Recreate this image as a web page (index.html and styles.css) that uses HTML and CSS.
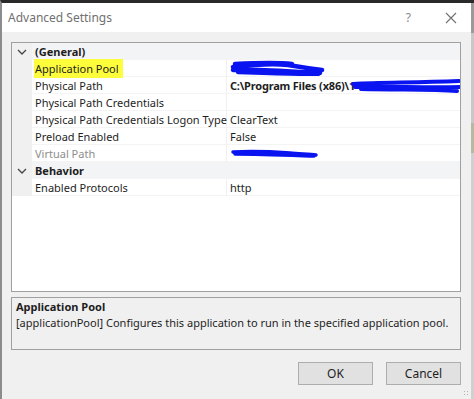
FILE: index.html
```html
<!DOCTYPE html>
<html lang="en">
<head>
    <meta charset="UTF-8">
    <title>Advanced Settings</title>
    <link rel="stylesheet" href="styles.css">
</head>
<body>
    <div class="screen">
        <div class="dialog">
            <div class="title-bar">
                <span class="title">Advanced Settings</span>
                <span class="help-btn">?</span>
                <svg class="close-btn" width="12" height="12" viewBox="0 0 12 12">
                    <path d="M1 1 L11 11 M11 1 L1 11" stroke="#707070" stroke-width="1.1" fill="none"/>
                </svg>
            </div>

            <div class="dialog-body">
                <div class="prop-grid">
                    <div class="row category">
                        <div class="gutter"><svg width="10" height="6" viewBox="0 0 10 6"><path d="M1 1 L5 5 L9 1" stroke="#444" stroke-width="1.3" fill="none"/></svg></div>
                        <div class="name">(General)</div>
                    </div>
                    <div class="row">
                        <div class="gutter"></div>
                        <div class="name"><span class="marker">Application Pool</span></div>
                        <div class="value">
                            <svg class="scribble" width="96" height="16" viewBox="0 0 96 16">
                                <path d="M3 7 C20 5 40 3 58 5 C70 7 82 9 92 10 M3 10 C25 9 50 11 90 13 M5 4 C25 3 45 2 62 4 M8 12 C40 13 70 14 88 14" stroke="#0a14f0" stroke-width="4.5" stroke-linecap="round" fill="none"/>
                            </svg>
                        </div>
                    </div>
                    <div class="row">
                        <div class="gutter"></div>
                        <div class="name">Physical Path</div>
                        <div class="value bold">C:\Program Files (x86)\<span class="cut">1</span>
                            <svg class="scribble" width="112" height="18" viewBox="0 0 112 18">
                                <path d="M2 8 C30 6 60 7 108 5 M4 11 C40 10 70 12 110 11 M10 13 C50 14 80 13 106 15" stroke="#0a14f0" stroke-width="4" stroke-linecap="round" fill="none"/>
                            </svg>
                        </div>
                    </div>
                    <div class="row">
                        <div class="gutter"></div>
                        <div class="name">Physical Path Credentials</div>
                        <div class="value"></div>
                    </div>
                    <div class="row">
                        <div class="gutter"></div>
                        <div class="name">Physical Path Credentials Logon Type</div>
                        <div class="value">ClearText</div>
                    </div>
                    <div class="row">
                        <div class="gutter"></div>
                        <div class="name">Preload Enabled</div>
                        <div class="value">False</div>
                    </div>
                    <div class="row disabled">
                        <div class="gutter"></div>
                        <div class="name">Virtual Path</div>
                        <div class="value">
                            <svg class="scribble" width="90" height="12" viewBox="0 0 90 12">
                                <path d="M3 5 C25 4 45 5 60 6 C70 7 80 7 86 8 M5 7 C30 7 55 8 84 9" stroke="#0a14f0" stroke-width="3.5" stroke-linecap="round" fill="none"/>
                            </svg>
                        </div>
                    </div>
                    <div class="row category">
                        <div class="gutter"><svg width="10" height="6" viewBox="0 0 10 6"><path d="M1 1 L5 5 L9 1" stroke="#444" stroke-width="1.3" fill="none"/></svg></div>
                        <div class="name">Behavior</div>
                    </div>
                    <div class="row">
                        <div class="gutter"></div>
                        <div class="name">Enabled Protocols</div>
                        <div class="value">http</div>
                    </div>
                </div>

                <div class="description">
                    <div class="desc-title">Application Pool</div>
                    <div class="desc-text">[applicationPool] Configures this application to run in the specified application pool.</div>
                </div>

                <div class="buttons">
                    <button class="btn">OK</button>
                    <button class="btn">Cancel</button>
                </div>
                <div class="grip"></div>
            </div>
        </div>
        <div class="backdrop"></div>
    </div>
</body>
</html>
```

FILE: styles.css
```css
body {
    margin: 0;
    padding: 0;
    font-family: "Noto Sans", "Open Sans", sans-serif;
    font-size: 11px;
    color: #1e1e1e;
    background-color: #fff;
    overflow: hidden;
}

.screen {
    display: flex;
    width: 474px;
    height: 399px;
    border-top: 3px solid #2a2a2a;
    border-left: 2px solid #8c8c8c;
    box-sizing: border-box;
}

.dialog {
    flex: 1;
    min-width: 0;
    display: flex;
    flex-direction: column;
    background-color: #f0f0f0;
}

.backdrop {
    width: 3px;
    flex: none;
    background: linear-gradient(#9a9a9a 0 30px, #c8c8c8 30px 120px, #b5b9a0 120px 150px, #d0d0d0 150px);
}

.title-bar {
    height: 29px;
    background-color: #fff;
    display: flex;
    align-items: center;
    padding-left: 6px;
}

.title {
    flex: 1;
    color: #707070;
    font-size: 12px;
}

.help-btn {
    color: #888;
    font-size: 12px;
    margin-right: 34px;
}

.close-btn {
    margin-right: 14px;
}

.dialog-body {
    flex: 1;
    position: relative;
    padding: 10px 10px 0 9px;
    display: flex;
    flex-direction: column;
}

.prop-grid {
    height: 250px;
    box-sizing: border-box;
    border: 1px solid #a0a0a0;
    background-color: #fff;
    overflow: hidden;
}

.row {
    display: flex;
    height: 17px;
    line-height: 17px;
}

.gutter {
    width: 20px;
    flex: none;
    background-color: #f0f0f0;
    display: flex;
    align-items: center;
    justify-content: center;
}

.name {
    width: 195px;
    flex: none;
    padding-left: 3px;
    box-sizing: border-box;
    border-bottom: 1px solid #f4f4f4;
    border-right: 1px solid #f0f0f0;
    white-space: nowrap;
}

.value {
    flex: 1;
    min-width: 0;
    padding-left: 3px;
    border-bottom: 1px solid #f4f4f4;
    white-space: nowrap;
    overflow: hidden;
    display: flex;
    align-items: center;
}

.row.category {
    background-color: #f3f4f6;
}

.row.category .name {
    font-weight: bold;
    border-right: none;
    flex: 1;
}

.row.disabled .name {
    color: #8d8d8d;
}

.bold {
    font-weight: bold;
    letter-spacing: -0.2px;
}

.marker {
    background-color: #fdfd3c;
    padding: 2px 4px 2px 1px;
    margin-left: -1px;
}

.cut {
    margin-right: -4px;
}

.scribble {
    flex: none;
}

.description {
    margin-top: 5px;
    height: 53px;
    box-sizing: border-box;
    border: 1px solid #a0a0a0;
    padding: 1px 4px;
    line-height: 16px;
    white-space: nowrap;
}

.desc-title {
    font-weight: bold;
}

.buttons {
    display: flex;
    justify-content: flex-end;
    gap: 13px;
    margin-top: 12px;
}

.btn {
    width: 75px;
    height: 23px;
    background-color: #e1e1e1;
    border: 1px solid #adadad;
    font-family: "Noto Sans", "Open Sans", sans-serif;
    font-size: 12px;
    color: #1e1e1e;
    padding: 0;
}

.grip {
    position: absolute;
    right: 2px;
    bottom: 3px;
    width: 6px;
    height: 6px;
    background: radial-gradient(circle, #b0b0b0 1px, transparent 1px) 0 0 / 3px 3px;
}
```
